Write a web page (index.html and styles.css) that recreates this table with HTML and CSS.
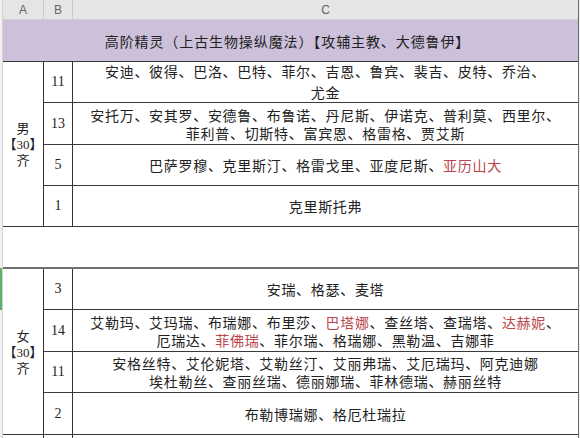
FILE: index.html
```html
<!DOCTYPE html>
<html lang="zh">
<head>
<meta charset="utf-8">
<title>高阶精灵</title>
<link rel="stylesheet" href="styles.css">
</head>
<body>
<div class="sheet">
  <div class="colheads">
    <div class="ch">A</div>
    <div class="ch">B</div>
    <div class="ch">C</div>
  </div>
  <div class="title"><div class="txt">高阶精灵（上古生物操纵魔法）【攻辅主教、大德鲁伊】</div></div>

  <div class="group male">
    <div class="gender"><div class="txt">男<br>【30】<br>齐</div></div>
    <div class="num">11</div>
    <div class="names tall"><div class="txt">安迪、彼得、巴洛、巴特、菲尔、吉恩、鲁宾、裴吉、皮特、乔治、<br>尤金</div></div>
    <div class="num">13</div>
    <div class="names"><div class="txt">安托万、安其罗、安德鲁、布鲁诺、丹尼斯、伊诺克、普利莫、西里尔、<br>菲利普、切斯特、富宾恩、格雷格、贾艾斯</div></div>
    <div class="num">5</div>
    <div class="names"><div class="txt">巴萨罗穆、克里斯汀、格雷戈里、亚度尼斯、<span class="red">亚历山大</span></div></div>
    <div class="num">1</div>
    <div class="names"><div class="txt">克里斯托弗</div></div>
  </div>

  <div class="blank"></div>

  <div class="group female">
    <div class="gender"><div class="txt">女<br>【30】<br>齐</div></div>
    <div class="num">3</div>
    <div class="names"><div class="txt">安瑞、格瑟、麦塔</div></div>
    <div class="num">14</div>
    <div class="names"><div class="txt">艾勒玛、艾玛瑞、布瑞娜、布里莎、<span class="red">巴塔娜</span>、查丝塔、查瑞塔、<span class="red">达赫妮</span>、<br>厄瑞达、<span class="red">菲佛瑞</span>、菲尔瑞、格瑞娜、黑勒温、吉娜菲</div></div>
    <div class="num">11</div>
    <div class="names"><div class="txt">安格丝特、艾伦妮塔、艾勒丝汀、艾丽弗瑞、艾厄瑞玛、阿克迪娜<br>埃杜勒丝、查丽丝瑞、德丽娜瑞、菲林德瑞、赫丽丝特</div></div>
    <div class="num">2</div>
    <div class="names"><div class="txt">布勒博瑞娜、格厄杜瑞拉</div></div>
  </div>

  <div class="group next">
    <div class="gcell"></div>
    <div class="gcell"></div>
    <div class="gcell last"></div>
  </div>

  <div class="sel"></div>
</div>
</body>
</html>
```

FILE: styles.css
```css
* {
  box-sizing: border-box;
}

html, body {
  margin: 0;
  padding: 0;
  background: #f1f1f1;
}

body {
  font-family: "Liberation Serif", "Noto Sans CJK SC", sans-serif;
  color: #222;
  width: 580px;
  height: 438px;
  overflow: hidden;
}

.sheet {
  position: relative;
  width: 577px;
  margin-left: 2px;
  border-left: 1px solid #d2d2d2;
  border-right: 1px solid #6a6a6a;
  background: #fff;
}

.colheads {
  display: grid;
  grid-template-columns: 41px 29px 1fr;
  height: 20px;
  background: #e5e5e5;
  border-bottom: 1px solid #d0d0d0;
}

.ch {
  display: flex;
  align-items: center;
  justify-content: center;
  font-family: "Liberation Sans", "Noto Sans", sans-serif;
  font-size: 12px;
  color: #666;
  border-right: 1px solid #c9c9c9;
}

.ch:last-child {
  border-right: none;
}

.title {
  height: 42px;
  background: #ccc0da;
  border-bottom: 1px solid #3a3a3a;
  display: flex;
  align-items: center;
  justify-content: center;
  font-family: "Noto Sans CJK SC", sans-serif;
  font-size: 14px;
  letter-spacing: 0.9px;
  padding-right: 6px;
}

.group {
  display: grid;
  grid-template-columns: 41px 29px 1fr;
}

.male {
  grid-template-rows: 41px 42px 41px 41px;
}

.female {
  grid-template-rows: 41px 42px 41px 42px;
}

.gender {
  grid-row: 1 / -1;
  grid-column: 1;
  display: flex;
  align-items: center;
  justify-content: center;
  text-align: center;
  font-size: 13px;
  line-height: 16px;
  border-right: 1px solid #333;
  border-bottom: 1px solid #3a3a3a;
  padding-top: 2px;
}

.num {
  grid-column: 2;
  display: flex;
  align-items: center;
  justify-content: center;
  font-size: 14px;
  border-right: 1px solid #333;
  border-bottom: 1px solid #3a3a3a;
}

.names {
  grid-column: 3;
  display: flex;
  align-items: center;
  justify-content: center;
  text-align: center;
  font-family: "Noto Sans CJK SC", sans-serif;
  font-size: 14px;
  letter-spacing: 0.7px;
  line-height: 18px;
  border-bottom: 1px solid #3a3a3a;
}

.names.tall {
  line-height: 21px;
}

.txt {
  white-space: nowrap;
}

.red {
  color: #b9474a;
}

.blank {
  height: 42px;
  border-bottom: 2px solid #707070;
}

.next {
  height: 20px;
}

.gcell {
  border-right: 1px solid #333;
}

.gcell.last {
  border-right: none;
}

.sel {
  position: absolute;
  left: -3px;
  top: 268px;
  width: 2px;
  height: 42px;
  background: #5fae6a;
}
```
